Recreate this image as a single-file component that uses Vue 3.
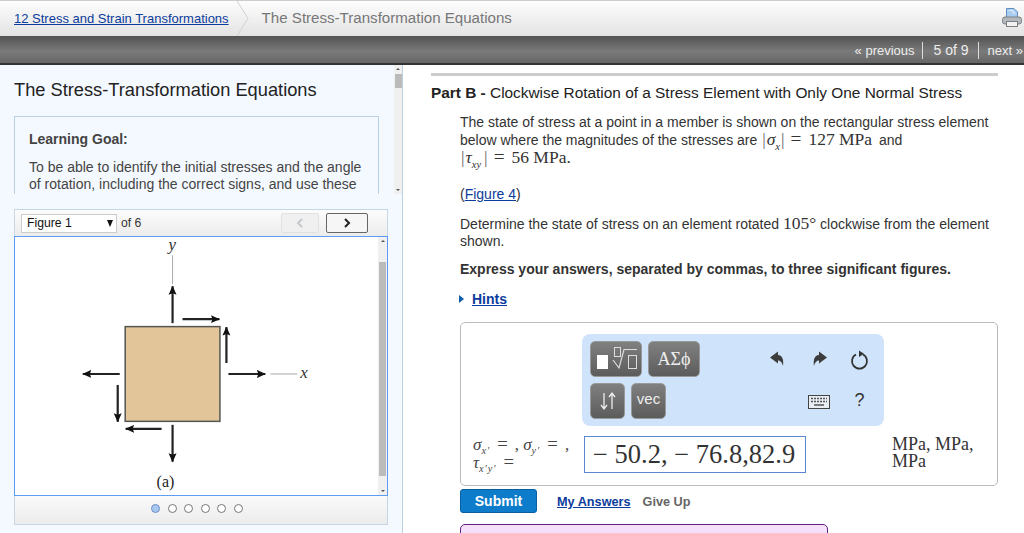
<script setup>
const dots = [0, 1, 2, 3, 4, 5]
</script>

<template>
  <div class="page">
    <header class="crumbs">
      <a class="crumb-link">12 Stress and Strain Transformations</a>
      <svg class="chevron" width="14" height="35" viewBox="0 0 14 35">
        <path d="M1 0 L12 17.5 L1 35" fill="none" stroke="#d0d0d0" stroke-width="1" />
      </svg>
      <span class="crumb-title">The Stress-Transformation Equations</span>
      <svg class="printer" width="20" height="20" viewBox="0 0 20 20">
        <path d="M4.500 .5 H12 L15.500 4 V10 H4.500 Z" fill="#a9cdf0" stroke="#5f8fc0" />
        <path d="M7 2.500 H11 V5 H13.500" fill="none" stroke="#e4f0fb" />
        <rect x=".5" y="9" width="19" height="7" rx="2.500" fill="#b4b8bc" stroke="#7c8084" />
        <rect x="4.500" y="13.500" width="11" height="5" fill="#f2f2f2" stroke="#7c8084" />
      </svg>
    </header>
    <nav class="pager">
      <span class="pager-item small">« previous</span>
      <span class="pager-item sep">5 of 9</span>
      <span class="pager-item sep last small">next »</span>
    </nav>
    <main class="main">
      <aside class="side">
        <div class="intro">
          <div class="intro-body">
            <h1 class="side-title">The Stress-Transformation Equations</h1>
            <section class="goal">
              <h2 class="goal-title">Learning Goal:</h2>
              <p class="goal-text">To be able to identify the initial stresses and the angle of rotation, including the correct signs, and use these</p>
            </section>
          </div>
          <div class="scroll outer-scroll">
            <span class="tri up"></span>
            <span class="outer-thumb"></span>
            <span class="grow"></span>
            <span class="tri down"></span>
          </div>
        </div>
        <section class="figure">
          <div class="fig-head">
            <div class="fig-select"><span>Figure 1</span><span class="caret"></span></div>
            <span class="fig-of">of 6</span>
            <button class="fig-btn prev">
              <svg width="8" height="10" viewBox="0 0 8 10"><path d="M6 1 L2 5 L6 9" fill="none" stroke="#c4c8cc" stroke-width="2" /></svg>
            </button>
            <button class="fig-btn next">
              <svg width="8" height="10" viewBox="0 0 8 10"><path d="M2 1 L6 5 L2 9" fill="none" stroke="#222" stroke-width="2" /></svg>
            </button>
          </div>
          <div class="fig-view">
            <svg class="diagram" width="364" height="258" viewBox="15 237 364 258">
              <defs>
                <marker id="head" markerWidth="9" markerHeight="9" refX="8.500" refY="4.500" orient="auto" markerUnits="userSpaceOnUse">
                  <path d="M0 .5 L9 4.500 L0 8.500 L1.500 4.500 Z" fill="#111" />
                </marker>
              </defs>
              <rect x="125.500" y="326.500" width="95" height="95" fill="#e2c699" stroke="#555" stroke-width="1.500" />
              <g stroke="#222" stroke-width="2.200" fill="none">
                <path d="M173 323 V286" marker-end="url(#head)" />
                <path d="M183 319 H220" marker-end="url(#head)" />
                <path d="M227 363 V327" marker-end="url(#head)" />
                <path d="M229 374 H266" marker-end="url(#head)" />
                <path d="M120 374 H83" marker-end="url(#head)" />
                <path d="M118 385 V422" marker-end="url(#head)" />
                <path d="M162 429 H126" marker-end="url(#head)" />
                <path d="M173 425 V462" marker-end="url(#head)" />
              </g>
              <path d="M173 255 V284 M271 374 H298" stroke="#aaa" stroke-width="1" fill="none" />
              <text x="169" y="250" class="axis">y</text>
              <text x="301" y="378" class="axis">x</text>
              <text x="157" y="487" class="cap">(a)</text>
            </svg>
            <div class="scroll inner-scroll">
              <span class="tri up"></span>
              <span class="inner-thumb"></span>
              <span class="tri down"></span>
            </div>
          </div>
          <div class="fig-foot">
            <span v-for="d in dots" :key="d" class="dot" :class="{ on: d === 0 }"></span>
          </div>
        </section>
      </aside>

      <article class="content">
        <div class="rule"></div>
        <h2 class="part"><b>Part B -</b> Clockwise Rotation of a Stress Element with Only One Normal Stress</h2>
        <div class="body">
          <p class="para">
            The state of stress at a point in a member is shown on the rectangular stress element
            below where the magnitudes of the stresses are
            <span class="m"><span class="bar">|</span><i>σ<sub>x</sub></i><span class="bar">|</span><span class="op">=</span>127 MPa</span><span class="after"> and</span><br />
            <span class="m"><span class="bar">|</span><i class="tau">τ<sub>xy</sub></i><span class="bar">|</span><span class="op">=</span>56 MPa.</span>
          </p>
          <p class="fig-ref">(<a class="lnk">Figure 4</a>)</p>
          <p class="det">Determine the state of stress on an element rotated <span class="m">105°</span> clockwise from the element shown.</p>
          <p class="express">Express your answers, separated by commas, to three significant figures.</p>
          <p class="hints"><span class="hint-tri"></span><a class="lnk">Hints</a></p>
          <section class="answer">
            <div class="toolbar">
              <div class="tool-left">
                <div class="tool-row">
                  <span class="tbtn wide">
                    <svg width="44" height="30" viewBox="0 0 44 30">
                      <rect x="3" y="11" width="11" height="14" fill="#fff" />
                      <rect x="20.500" y="3.500" width="6" height="9" fill="none" stroke="#ddd" />
                      <path d="M19 16 L25 24 L30 5.500 H43" fill="none" stroke="#ddd" stroke-width="1.200" />
                      <rect x="34.500" y="11.500" width="8" height="13" fill="none" stroke="#ddd" />
                    </svg>
                  </span>
                  <span class="tbtn wide greek">ΑΣϕ</span>
                </div>
                <div class="tool-row">
                  <span class="tbtn">
                    <svg width="18" height="20" viewBox="0 0 18 20"><path d="M5 2 V18 M2 14 L5 18 L8 14 M13 18 V2 M10 6 L13 2 L16 6" fill="none" stroke="#eee" stroke-width="1.300" /></svg>
                  </span>
                  <span class="tbtn vec">vec</span>
                </div>
              </div>
              <div class="tool-right">
                <svg width="18" height="18" viewBox="0 0 18 18"><path d="M1 6.500 L9 .5 V4 C13 4 15 8 14 15 C13 11 11 9.500 9 9.500 V12.500 Z" fill="#3c3c3c" /></svg>
                <svg width="18" height="18" viewBox="0 0 18 18"><path d="M17 6.500 L9 .5 V4 C5 4 3 8 4 15 C5 11 7 9.500 9 9.500 V12.500 Z" fill="#3c3c3c" /></svg>
                <svg width="20" height="20" viewBox="0 0 20 20"><path d="M13 4.500 A7.500 7.500 0 1 1 6 4.500" fill="none" stroke="#333" stroke-width="1.800" /><path d="M9 .5 L14 3.800 L9 7 Z" fill="#333" /></svg>
                <span></span>
                <svg class="kbd" width="22" height="14" viewBox="0 0 22 14"><rect x=".5" y=".5" width="21" height="13" fill="#e8eef4" stroke="#444" /><path d="M3 3.500 H19 M3 6.500 H19" stroke="#555" stroke-width="1.500" stroke-dasharray="2 1" /><path d="M6 10 H16" stroke="#555" stroke-width="1.500" /></svg>
                <span class="help">?</span>
              </div>
            </div>
            <div class="answer-row">
              <div class="ans-label">
                <span><i>σ<sub>x′</sub></i><span class="op">=</span>, <i>σ<sub>y′</sub></i><span class="op">=</span>,</span>
                <span><i>τ<sub>x′y′</sub></i><span class="op">=</span></span>
              </div>
              <div class="ans-input">− 50.2, − 76.8,82.9</div>
              <div class="ans-unit">MPa, MPa, MPa</div>
            </div>
          </section>
          <div class="actions">
            <button class="submit">Submit</button>
            <a class="my">My Answers</a>
            <a class="give">Give Up</a>
          </div>
          <div class="notice"></div>
        </div>
      </article>
    </main>
  </div>
</template>

<style>
html, body { margin: 0; overflow: hidden; background: #fff; }
</style>

<style scoped>
.page { width: 1024px; height: 533px; overflow: hidden; font-family: "Liberation Sans", Arial, sans-serif; color: #333; display: flex; flex-direction: column; }
p, h1, h2 { margin: 0; font-weight: normal; }
.crumbs { height: 35px; border-top: 1px solid #ccc; background: linear-gradient(#fdfdfd, #e3e3e3); display: flex; align-items: center; padding-left: 14px; flex: none; }
.crumb-link { font-size: 13px; color: #0c3c9c; text-decoration: underline; }
.chevron { margin-left: 7px; }
.crumb-title { font-size: 15.100px; color: #777; margin-left: 12px; flex: 1; margin-top: -2px; }
.printer { margin-right: 2px; margin-top: -1px; }
.pager { height: 29px; flex: none; display: flex; justify-content: flex-end; align-items: center; border-top: 1px solid #555; border-bottom: 2px solid #333; box-sizing: border-box; background: linear-gradient(#555, #7a7a7a 55%, #666); color: #eee; font-size: 14px; padding-right: 1px; }
.pager-item { line-height: 17px; }
.pager-item.small { font-size: 13px; }
.pager-item.sep { border-left: 1px solid #ddd; margin-left: 7px; padding-left: 11px; padding-right: 2px; }
.pager-item.last { padding-left: 9px; padding-right: 0; }
.main { flex: 1; display: flex; min-height: 0; }
.side { width: 402px; flex: none; background: #f4f9ff; border-right: 1px solid #bcd0e0; }
.intro { height: 129px; display: flex; overflow: hidden; }
.intro-body { flex: 1; padding: 14px 15px 0 14px; min-width: 0; }
.side-title { font-size: 18.250px; line-height: 22px; color: #222; white-space: nowrap; }
.goal { margin-top: 15px; border: 1px solid #b8d0e4; border-bottom: none; padding: 14px 14px 0; height: 100px; color: #444; }
.goal-title { font-size: 14px; font-weight: bold; line-height: 16px; }
.goal-text { font-size: 14px; line-height: 17px; margin-top: 12px; }
.scroll { display: flex; flex-direction: column; align-items: center; background: #f0f0f0; flex: none; }
.outer-scroll { width: 8px; }
.grow { flex: 1; }
.tri { width: 0; height: 0; border-left: 2px solid transparent; border-right: 2px solid transparent; margin: 3px 0; }
.tri.up { border-bottom: 2px solid #555; }
.tri.down { border-top: 2px solid #555; }
.outer-thumb { width: 7px; height: 14px; background: #bbb; margin-top: 1px; }
.figure { margin: 15px 0 0 14px; width: 374px; border: 1px solid #c6d6e4; box-sizing: border-box; height: 316px; display: flex; flex-direction: column; }
.fig-head { height: 26px; flex: none; display: flex; align-items: center; background: linear-gradient(#fcfcfc, #ececec); padding-left: 6px; font-size: 12.200px; color: #333; }
.fig-select { width: 96px; height: 19px; box-sizing: border-box; background: #fff; border: 1px solid #ccc; display: flex; align-items: center; justify-content: space-between; padding: 0 3px 0 5px; color: #111; }
.caret { width: 0; height: 0; border-left: 3.500px solid transparent; border-right: 3.500px solid transparent; border-top: 7px solid #111; }
.fig-of { margin-left: 4px; flex: 1; }
.fig-btn { width: 42px; height: 20px; box-sizing: border-box; padding: 0; display: flex; align-items: center; justify-content: center; border-radius: 2px; }
.fig-btn.prev { width: 38px; background: #f0f0f0; border: 1px solid #e2e2e2; margin-right: 7px; }
.fig-btn.next { background: #f6f6f6; border: 1px solid #666; margin-right: 19px; }
.fig-view { height: 260px; flex: none; margin: 0 -1px; border: 1px solid #5d9cf5; box-sizing: border-box; background: #fff; display: flex; }
.diagram { display: block; flex: 1; }
.axis { font: italic 17px "Liberation Serif", serif; fill: #333; }
.cap { font: 16px "Liberation Serif", serif; fill: #222; }
.inner-scroll { width: 9px; }
.inner-thumb { width: 7px; flex: 1; margin: 17px 0 11px; background: #bbb; }
.fig-foot { flex: 1; display: flex; align-items: center; justify-content: center; gap: 7.500px; background: linear-gradient(#fafafa, #ececec); padding: 0 8px 4px 0; }
.dot { width: 9px; height: 9px; box-sizing: border-box; border-radius: 50%; border: 1.500px solid #777; background: #fff; }
.dot.on { background: #a8c8f4; border-color: #6d8fc0; }
.content { flex: 1; padding: 8px 26px 0 28px; min-width: 0; }
.rule { height: 3px; background: #ccc; }
.part { font-size: 15.400px; line-height: 18px; margin-top: 8px; color: #222; white-space: nowrap; }
.part b { font-weight: bold; }
.body { padding-left: 29px; font-size: 14px; line-height: 18px; color: #333; }
.para { margin-top: 11px; }
.m { font-family: "Liberation Serif", serif; font-size: 17.500px; line-height: 0; }
.bar { color: #666; margin: 0 1px; }
.tau { margin-right: 2px; }
.after { margin-left: 3px; }
.op { margin: 0 7px 0 5px; font-size: 1.100em; }
.m sub, .ans-label sub { font-size: .6em; line-height: 0; }
.fig-ref { margin-top: 18px; }
.lnk { color: #0c3c9c; text-decoration: underline; }
.det { margin-top: 13px; line-height: 17px; }
.express { margin-top: 10px; font-weight: bold; }
.hints { margin-top: 12px; font-weight: bold; display: flex; align-items: center; gap: 8px; }
.hint-tri { width: 0; height: 0; border-top: 4px solid transparent; border-bottom: 4px solid transparent; border-left: 5px solid #0c5ca8; margin-left: -1px; }
.answer { margin-top: 14px; height: 164px; box-sizing: border-box; border: 1px solid #bbb; border-radius: 5px; padding: 11px 0 0 121px; }
.toolbar { width: 302px; height: 92px; box-sizing: border-box; background: #cfe4fb; border-radius: 8px; padding: 7px 8px; display: flex; justify-content: space-between; }
.tool-left { display: flex; flex-direction: column; gap: 6px; }
.tool-row { display: flex; gap: 6px; }
.tbtn { width: 35px; height: 36px; box-sizing: border-box; border-radius: 5px; border: 1px solid #999; background: linear-gradient(#808080, #5c5c5c); color: #eee; display: flex; align-items: center; justify-content: center; }
.tbtn.wide { width: 52px; }
.greek { font: 18px "Liberation Serif", serif; }
.vec { font-size: 15px; padding-bottom: 4px; }
.tool-right { display: grid; grid-template-columns: repeat(3, 41px); grid-auto-rows: 42px; align-items: center; justify-items: center; margin: -2px -4px 0 0; }
.kbd { grid-column: 2; }
.help { font-size: 18px; color: #333; grid-column: 3; margin-bottom: 4px; }
.answer-row { display: flex; margin-top: 9px; margin-left: -121px; align-items: center; }
.ans-label { width: 123px; box-sizing: border-box; padding: 0 0 2px 12px; font: 17px/17px "Liberation Serif", serif; display: flex; flex-direction: column; color: #444; white-space: nowrap; }
.ans-label sub { letter-spacing: 1px; }
.ans-label .op { margin: 0 7px; }
.ans-input { width: 222px; height: 37px; box-sizing: border-box; border: 1.500px solid #5b87d0; font: 26.500px/35px "Liberation Serif", serif; padding-left: 8px; color: #333; white-space: nowrap; }
.ans-unit { width: 96px; margin-left: 86px; padding-bottom: 2px; font: 18px/17px "Liberation Serif", serif; color: #333; }
.actions { display: flex; align-items: center; margin-top: 3px; font-size: 12.700px; font-weight: bold; }
.submit { width: 77px; height: 24px; padding: 0; background: #0d7ccb; color: #fff; border: 1px solid #0a5f9f; border-radius: 3px; font: bold 14px "Liberation Sans", sans-serif; }
.my { margin-left: 20px; padding-top: 2px; color: #0c3c9c; text-decoration: underline; }
.give { margin-left: 12px; padding-top: 2px; color: #666; }
.notice { margin-top: 11px; width: 368px; height: 40px; box-sizing: border-box; background: #f5e0fc; border: 1px solid #60207f; border-radius: 5px; }
</style>
